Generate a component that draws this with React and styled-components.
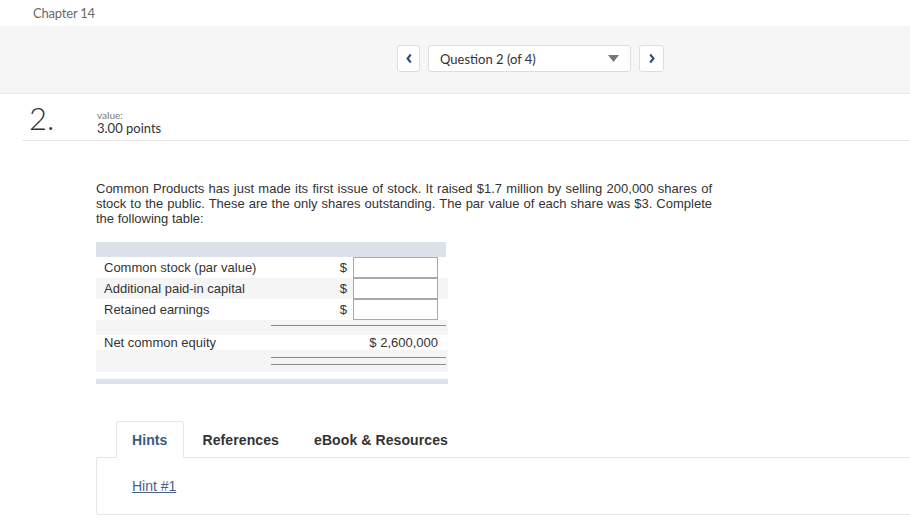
import React from "react";
import styled, { createGlobalStyle } from "styled-components";

const GlobalStyle = createGlobalStyle`
  html, body {
    margin: 0;
    padding: 0;
    background: #fff;
  }
  body {
    font-family: "Liberation Sans", Arial, sans-serif;
    color: #333;
    overflow: hidden;
  }
`;

const Page = styled.div`
  width: 910px;
  min-height: 525px;
`;

const ChapterBar = styled.div`
  height: 26px;
  display: flex;
  align-items: center;
  padding-left: 33px;
  font-family: Lato, "Open Sans", sans-serif;
  font-size: 13px;
  color: #6a6a6a;
  letter-spacing: -0.2px;
`;

const NavBand = styled.div`
  height: 68px;
  background: #f6f6f6;
  border-bottom: 1px solid #e9e9e9;
  padding: 19px 0 0 397px;
  box-sizing: border-box;
  display: flex;
  align-items: flex-start;
  gap: 8px;
`;

const NavButton = styled.div`
  width: ${(p) => p.$w}px;
  height: 27px;
  box-sizing: border-box;
  background: #fff;
  border: 1px solid #dedede;
  border-radius: 3px;
  display: flex;
  align-items: center;
  justify-content: center;
  color: #2a4a78;
`;

const Select = styled.div`
  width: 203px;
  height: 27px;
  box-sizing: border-box;
  background: #fff;
  border: 1px solid #dedede;
  border-radius: 3px;
  display: flex;
  align-items: center;
  justify-content: space-between;
  padding: 0 11px 0 11px;
  font-family: Lato, "Open Sans", sans-serif;
  font-size: 13px;
  color: #333;
`;

const QuestionHeader = styled.div`
  margin-left: 22px;
  height: 46px;
  border-bottom: 1px solid #e6e6e6;
  display: flex;
  align-items: flex-start;
`;

const Number = styled.div`
  width: 75px;
  padding-left: 7px;
  box-sizing: border-box;
  font-family: Lato, "Open Sans", sans-serif;
  font-weight: 300;
  font-size: 31px;
  line-height: 1;
  color: #333;
  margin-top: 9px;
`;

const Points = styled.div`
  font-family: Lato, "Open Sans", sans-serif;
  margin-top: 16px;
  display: flex;
  flex-direction: column;
`;

const PointsLabel = styled.span`
  font-size: 10px;
  line-height: 11px;
  color: #777;
`;

const PointsValue = styled.span`
  font-size: 13px;
  line-height: 15px;
  color: #333;
`;

const Content = styled.div`
  padding-left: 96px;
`;

const Prompt = styled.p`
  margin: 40px 0 0;
  width: 616px;
  font-size: 13px;
  line-height: 15px;
  text-align: justify;
  color: #333;
`;

const Table = styled.div`
  margin-top: 16px;
  width: 352px;
`;

const Row = styled.div`
  display: grid;
  grid-template-columns: 175px 175px;
  height: ${(p) => p.$h}px;
  background: ${(p) => p.$bg || "#fff"};
  font-size: 13px;
  color: #333;
`;

const HeadBand = styled.div`
  height: 15px;
  width: 350px;
  background: #dce2ea;
`;

const Label = styled.div`
  padding-left: 8px;
  display: flex;
  align-items: center;
`;

const Amount = styled.div`
  display: flex;
  align-items: center;
  justify-content: flex-end;
  padding-right: 8px;
`;

const Dollar = styled.span`
  margin-right: 6px;
`;

const InputBox = styled.div`
  width: 85px;
  height: 21px;
  box-sizing: border-box;
  border: 1px solid #a9a9a9;
  background: #fff;
`;

const RuleCell = styled.div`
  grid-column: 2;
  display: flex;
  flex-direction: column;
  padding-top: ${(p) => p.$top}px;
  gap: 6px;
`;

const Rule = styled.div`
  height: 1px;
  background: #8a8a8a;
`;

const FootBar = styled.div`
  margin-top: 7px;
  width: 352px;
  height: 5px;
  background: #dce2ea;
`;

const Tabs = styled.div`
  margin-top: 37px;
  padding-left: 20px;
  display: flex;
  gap: 3px;
  position: relative;
  z-index: 1;
`;

const Tab = styled.div`
  height: 37px;
  padding: 0 15px;
  box-sizing: border-box;
  display: flex;
  align-items: center;
  font-size: 14px;
  font-weight: bold;
  letter-spacing: 0.1px;
  color: ${(p) => (p.$active ? "#3a5a85" : "#333")};
  background: ${(p) => (p.$active ? "#fff" : "transparent")};
  border: 1px solid ${(p) => (p.$active ? "#e6e6e6" : "transparent")};
  border-bottom-color: ${(p) => (p.$active ? "#fff" : "transparent")};
  border-radius: 3px 3px 0 0;
  margin-bottom: -1px;
`;

const Panel = styled.div`
  height: 58px;
  box-sizing: border-box;
  border: 1px solid #e6e6e6;
  border-right: none;
  border-radius: 3px 0 0 3px;
  padding: 19px 0 0 35px;
`;

const HintLink = styled.a`
  font-size: 14px;
  color: #4a6289;
  text-decoration: underline;
`;

const Chevron = ({ dir }) => (
  <svg width="8" height="11" viewBox="0 0 8 11">
    <path
      d={dir === "left" ? "M5.8 1.5 L2.5 5.5 L5.8 9.5" : "M2.2 1.5 L5.5 5.5 L2.2 9.5"}
      fill="none"
      stroke="currentColor"
      strokeWidth="2"
    />
  </svg>
);

const Caret = () => (
  <svg width="11" height="7" viewBox="0 0 11 7">
    <path d="M0 0 H11 L5.5 7 Z" fill="#777" />
  </svg>
);

const rows = [
  { label: "Common stock (par value)", bg: "#fff" },
  { label: "Additional paid-in capital", bg: "#f5f5f5" },
  { label: "Retained earnings", bg: "#fff" },
];

const App = () => {
  return (
    <Page>
      <GlobalStyle />
      <ChapterBar>Chapter 14</ChapterBar>
      <NavBand>
        <NavButton $w={23}>
          <Chevron dir="left" />
        </NavButton>
        <Select>
          <span>Question 2 (of 4)</span>
          <Caret />
        </Select>
        <NavButton $w={25}>
          <Chevron dir="right" />
        </NavButton>
      </NavBand>
      <QuestionHeader>
        <Number>2.</Number>
        <Points>
          <PointsLabel>value:</PointsLabel>
          <PointsValue>3.00 points</PointsValue>
        </Points>
      </QuestionHeader>
      <Content>
        <Prompt>
          Common Products has just made its first issue of stock. It raised
          $1.7 million by selling 200,000 shares of stock to the public. These
          are the only shares outstanding. The par value of each share was $3.
          Complete the following table:
        </Prompt>
        <Table>
          <HeadBand />
          {rows.map((r) => (
            <Row key={r.label} $h={21} $bg={r.bg}>
              <Label>{r.label}</Label>
              <Amount>
                <Dollar>$</Dollar>
                <InputBox />
              </Amount>
            </Row>
          ))}
          <Row $h={15} $bg="#f5f5f5">
            <RuleCell $top={5}>
              <Rule />
            </RuleCell>
          </Row>
          <Row $h={15}>
            <Label>Net common equity</Label>
            <Amount>$ 2,600,000</Amount>
          </Row>
          <Row $h={22} $bg="#f5f5f5">
            <RuleCell $top={7}>
              <Rule />
              <Rule />
            </RuleCell>
          </Row>
          <FootBar />
        </Table>
        <Tabs>
          <Tab $active>Hints</Tab>
          <Tab>References</Tab>
          <Tab>eBook &amp; Resources</Tab>
        </Tabs>
        <Panel>
          <HintLink href="#">Hint #1</HintLink>
        </Panel>
      </Content>
    </Page>
  );
};

export default App;
